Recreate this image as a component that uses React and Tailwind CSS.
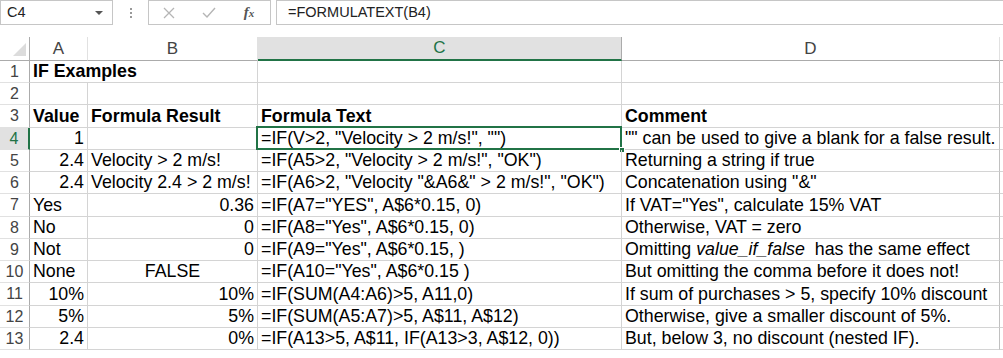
import React from "react";

const ROWS = [
  { n: 1, a: "", b: "", c: "", d: "", title: "IF Examples" },
  { n: 2, a: "", b: "", c: "", d: "" },
  { n: 3, a: "Value", b: "Formula Result", c: "Formula Text", d: "Comment", header: true },
  { n: 4, a: "1", aR: true, b: "", c: '=IF(V>2, "Velocity > 2 m/s!", "")', d: '"" can be used to give a blank for a false result.' },
  { n: 5, a: "2.4", aR: true, b: "Velocity > 2 m/s!", c: '=IF(A5>2, "Velocity > 2 m/s!", "OK")', d: "Returning a string if true" },
  { n: 6, a: "2.4", aR: true, b: "Velocity 2.4 > 2 m/s!", c: '=IF(A6>2, "Velocity "&A6&" > 2 m/s!", "OK")', d: 'Concatenation using "&"' },
  { n: 7, a: "Yes", b: "0.36", bR: true, c: '=IF(A7="YES", A$6*0.15, 0)', d: 'If VAT="Yes", calculate 15% VAT' },
  { n: 8, a: "No", b: "0", bR: true, c: '=IF(A8="Yes", A$6*0.15, 0)', d: "Otherwise, VAT = zero" },
  { n: 9, a: "Not", b: "0", bR: true, c: '=IF(A9="Yes", A$6*0.15, )', d: "italic" },
  { n: 10, a: "None", b: "FALSE", bC: true, c: '=IF(A10="Yes", A$6*0.15 )', d: "But omitting the comma before it does not!" },
  { n: 11, a: "10%", aR: true, b: "10%", bR: true, c: "=IF(SUM(A4:A6)>5, A11,0)", d: "If sum of purchases > 5, specify 10% discount" },
  { n: 12, a: "5%", aR: true, b: "5%", bR: true, c: "=IF(SUM(A5:A7)>5, A$11, A$12)", d: "Otherwise, give a smaller discount of 5%." },
  { n: 13, a: "2.4", aR: true, b: "0%", bR: true, c: "=IF(A13>5, A$11, IF(A13>3, A$12, 0))", d: "But, below 3, no discount (nested IF)." },
];

// row heights, average ~22.25px like the capture
const HEIGHTS = ["h-[22px]", "h-[22px]", "h-[23px]", "h-[22px]", "h-[22px]", "h-[22px]", "h-[23px]", "h-[22px]", "h-[22px]", "h-[22px]", "h-[23px]", "h-[22px]", "h-[22px]"];

function Cell({ children, align = "left", className = "" }) {
  const al = align === "right" ? "justify-end" : align === "center" ? "justify-center" : "justify-start";
  return (
    <div className={`flex items-center ${al} px-[3px] border-r border-b border-[#d4d4d4] whitespace-nowrap ${className}`}>
      {children}
    </div>
  );
}

export default function App() {
  return (
    <div className="w-[1003px] h-[358px] overflow-hidden bg-white text-black" style={{ fontFamily: '"Liberation Sans", Arial, sans-serif' }}>
      {/* Formula bar */}
      <div className="flex h-[26px] items-start bg-white">
        <div className="w-[113px] h-[25px] border border-[#c6c6c6] flex items-center justify-between pl-[6px] pr-[9px] text-[14.5px] text-[#222]">
          <span>C4</span>
          <span className="w-0 h-0 border-l-[4px] border-r-[4px] border-t-[4px] border-l-transparent border-r-transparent border-t-[#555]" />
        </div>
        <div className="w-[35px] h-[25px] flex flex-col items-center justify-center gap-[2px]">
          <span className="w-[2px] h-[2px] bg-[#999]" />
          <span className="w-[2px] h-[2px] bg-[#999]" />
          <span className="w-[2px] h-[2px] bg-[#999]" />
        </div>
        <div className="w-[123px] h-[25px] border border-[#c6c6c6] flex items-center">
          <div className="w-[40px] flex justify-center">
            <svg width="12" height="12" viewBox="0 0 12 12"><path d="M1 1L11 11M11 1L1 11" stroke="#b5b5b5" strokeWidth="1.3" /></svg>
          </div>
          <div className="w-[40px] flex justify-center">
            <svg width="14" height="11" viewBox="0 0 14 11"><path d="M1 6L5 10L13 1" stroke="#b5b5b5" strokeWidth="1.4" fill="none" /></svg>
          </div>
          <div className="w-[40px] flex justify-center items-baseline text-[15px] italic font-bold text-[#555]" style={{ fontFamily: '"Liberation Serif", serif' }}>
            f<span className="text-[11px]">x</span>
          </div>
        </div>
        <div className="w-[5px]" />
        <div className="flex-1 h-[25px] border border-[#c6c6c6] border-r-0 flex items-center pl-[11px] text-[14.5px] text-[#222]">
          =FORMULATEXT(B4)
        </div>
      </div>

      {/* Sheet */}
      <div className="mt-[11px] grid grid-cols-[30px_58px_170px_364px_378px_3px] text-[17.8px]">
        {/* Column headers */}
        <div className="h-[24px] border-r border-b border-[#ababab] flex items-end justify-end pr-[3px] pb-[4px]">
          <svg width="13" height="13" viewBox="0 0 13 13"><path d="M13 0L13 13L0 13Z" fill="#dcdcdc" /></svg>
        </div>
        <div className="h-[24px] border-r border-[#e1e1e1] border-b border-b-[#ababab] flex items-center justify-center text-[17px] text-[#444]">A</div>
        <div className="h-[24px] border-r border-[#e1e1e1] border-b border-b-[#ababab] flex items-center justify-center text-[17px] text-[#444]">B</div>
        <div className="h-[24px] border-r border-[#ababab] bg-[#e1e1e1] border-b-2 border-b-[#217346] flex items-center justify-center text-[17px] text-[#217346]">C</div>
        <div className="h-[24px] border-r border-[#e1e1e1] border-b border-b-[#ababab] flex items-center justify-center text-[17px] text-[#444]">D</div>
        <div className="h-[24px] border-b border-b-[#ababab]" />

        {ROWS.map((r, i) => {
          const h = HEIGHTS[i];
          const sel = r.n === 4;
          const fw = r.header ? "font-bold" : "";
          return (
            <React.Fragment key={r.n}>
              <div className={`${h} flex items-center justify-center text-[16px] border-b border-[#e1e1e1] ${sel ? "bg-[#e1e1e1] text-[#217346] border-r-2 border-r-[#217346]" : "text-[#444] border-r border-r-[#ababab]"}`}>
                {r.n}
              </div>
              {r.title ? (
                <Cell className={`${h} font-bold border-r-0`}>{r.title}</Cell>
              ) : (
                <Cell align={r.aR ? "right" : "left"} className={`${h} ${fw}`}>{r.a}</Cell>
              )}
              <Cell align={r.bR ? "right" : r.bC ? "center" : "left"} className={`${h} ${fw}`}>{r.b}</Cell>
              <Cell className={`${h} ${fw} relative`}>
                {r.c}
                {sel && (
                  <>
                    <span className="absolute left-[-2px] top-[-2px] right-[-1px] bottom-[-1px] border-2 border-[#217346] pointer-events-none" />
                    <span className="absolute right-[-4px] bottom-[-4px] w-[6px] h-[6px] bg-[#217346] border border-white" />
                  </>
                )}
              </Cell>
              <Cell className={`${h} ${fw} border-r-[#c0c0c0]`}>
                {r.d === "italic" ? (
                  <span>
                    Omitting <i>value_if_false</i>{"\u00a0"} has the same effect
                  </span>
                ) : (
                  r.d
                )}
              </Cell>
              <div className={`${h} border-b border-[#d4d4d4]`} />
            </React.Fragment>
          );
        })}
      </div>
    </div>
  );
}
